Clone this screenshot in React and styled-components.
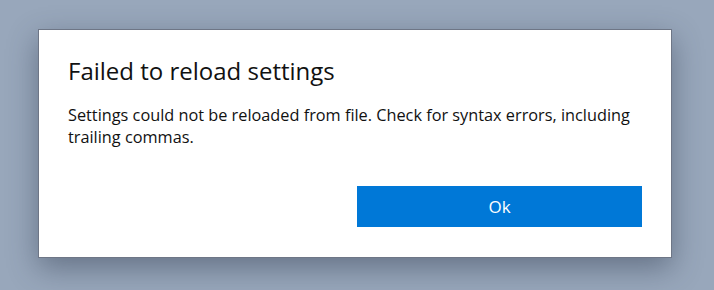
import React from "react";
import styled, { createGlobalStyle } from "styled-components";

const GlobalStyle = createGlobalStyle`
  html, body {
    margin: 0;
    padding: 0;
    background: #98a7bb;
  }
  * { box-sizing: border-box; }
`;

const Page = styled.div`
  width: 714px;
  height: 290px;
  padding: 29px 0 0 38px;
  background: #98a7bb;
  font-family: "Open Sans", "Noto Sans", sans-serif;
`;

const Dialog = styled.div`
  width: 634px;
  height: 229px;
  background: #ffffff;
  border: 1px solid #6e7686;
  box-shadow: 0 10px 28px rgba(40, 50, 70, 0.45);
  padding: 25px 29px 30px 29px;
  display: flex;
  flex-direction: column;
`;

const Title = styled.h1`
  margin: 0;
  font-size: 24px;
  font-weight: 400;
  line-height: 32px;
  color: #111111;
`;

const Message = styled.p`
  margin: 18px 0 0 0;
  font-size: 16.3px;
  line-height: 21.5px;
  color: #111111;
`;

const Actions = styled.div`
  margin-top: auto;
  display: flex;
  justify-content: flex-end;
`;

const Button = styled.button`
  width: 285px;
  height: 41px;
  border: none;
  border-radius: 0;
  background: #0078d7;
  color: #ffffff;
  font: inherit;
  font-size: 17px;
  cursor: pointer;
`;

export default function App() {
  return (
    <>
      <GlobalStyle />
      <Page>
        <Dialog>
          <Title>Failed to reload settings</Title>
          <Message>
            Settings could not be reloaded from file. Check for syntax errors, including trailing commas.
          </Message>
          <Actions>
            <Button type="button">Ok</Button>
          </Actions>
        </Dialog>
      </Page>
    </>
  );
}
